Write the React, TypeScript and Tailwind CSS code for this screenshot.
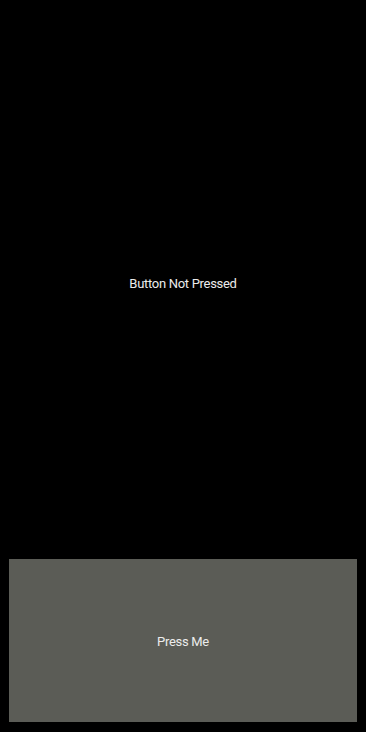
import React, { useState } from "react";

const App: React.FC = () => {
  const [pressed, setPressed] = useState<boolean>(false);

  return (
    <div className="flex flex-col h-[732px] w-full bg-black font-['Roboto',sans-serif]">
      <div className="flex flex-1 items-center justify-center pt-[9px]">
        <p className="text-[13px] tracking-[-0.3px] text-[#ececec]">
          {pressed ? "Button Pressed" : "Button Not Pressed"}
        </p>
      </div>
      <button
        type="button"
        onClick={() => setPressed(!pressed)}
        className="mx-[9px] mb-[10px] h-[163px] pt-[3px] bg-[#5b5c56] text-[13px] tracking-[-0.3px] text-[#ececec]"
      >
        Press Me
      </button>
    </div>
  );
};

export default App;
